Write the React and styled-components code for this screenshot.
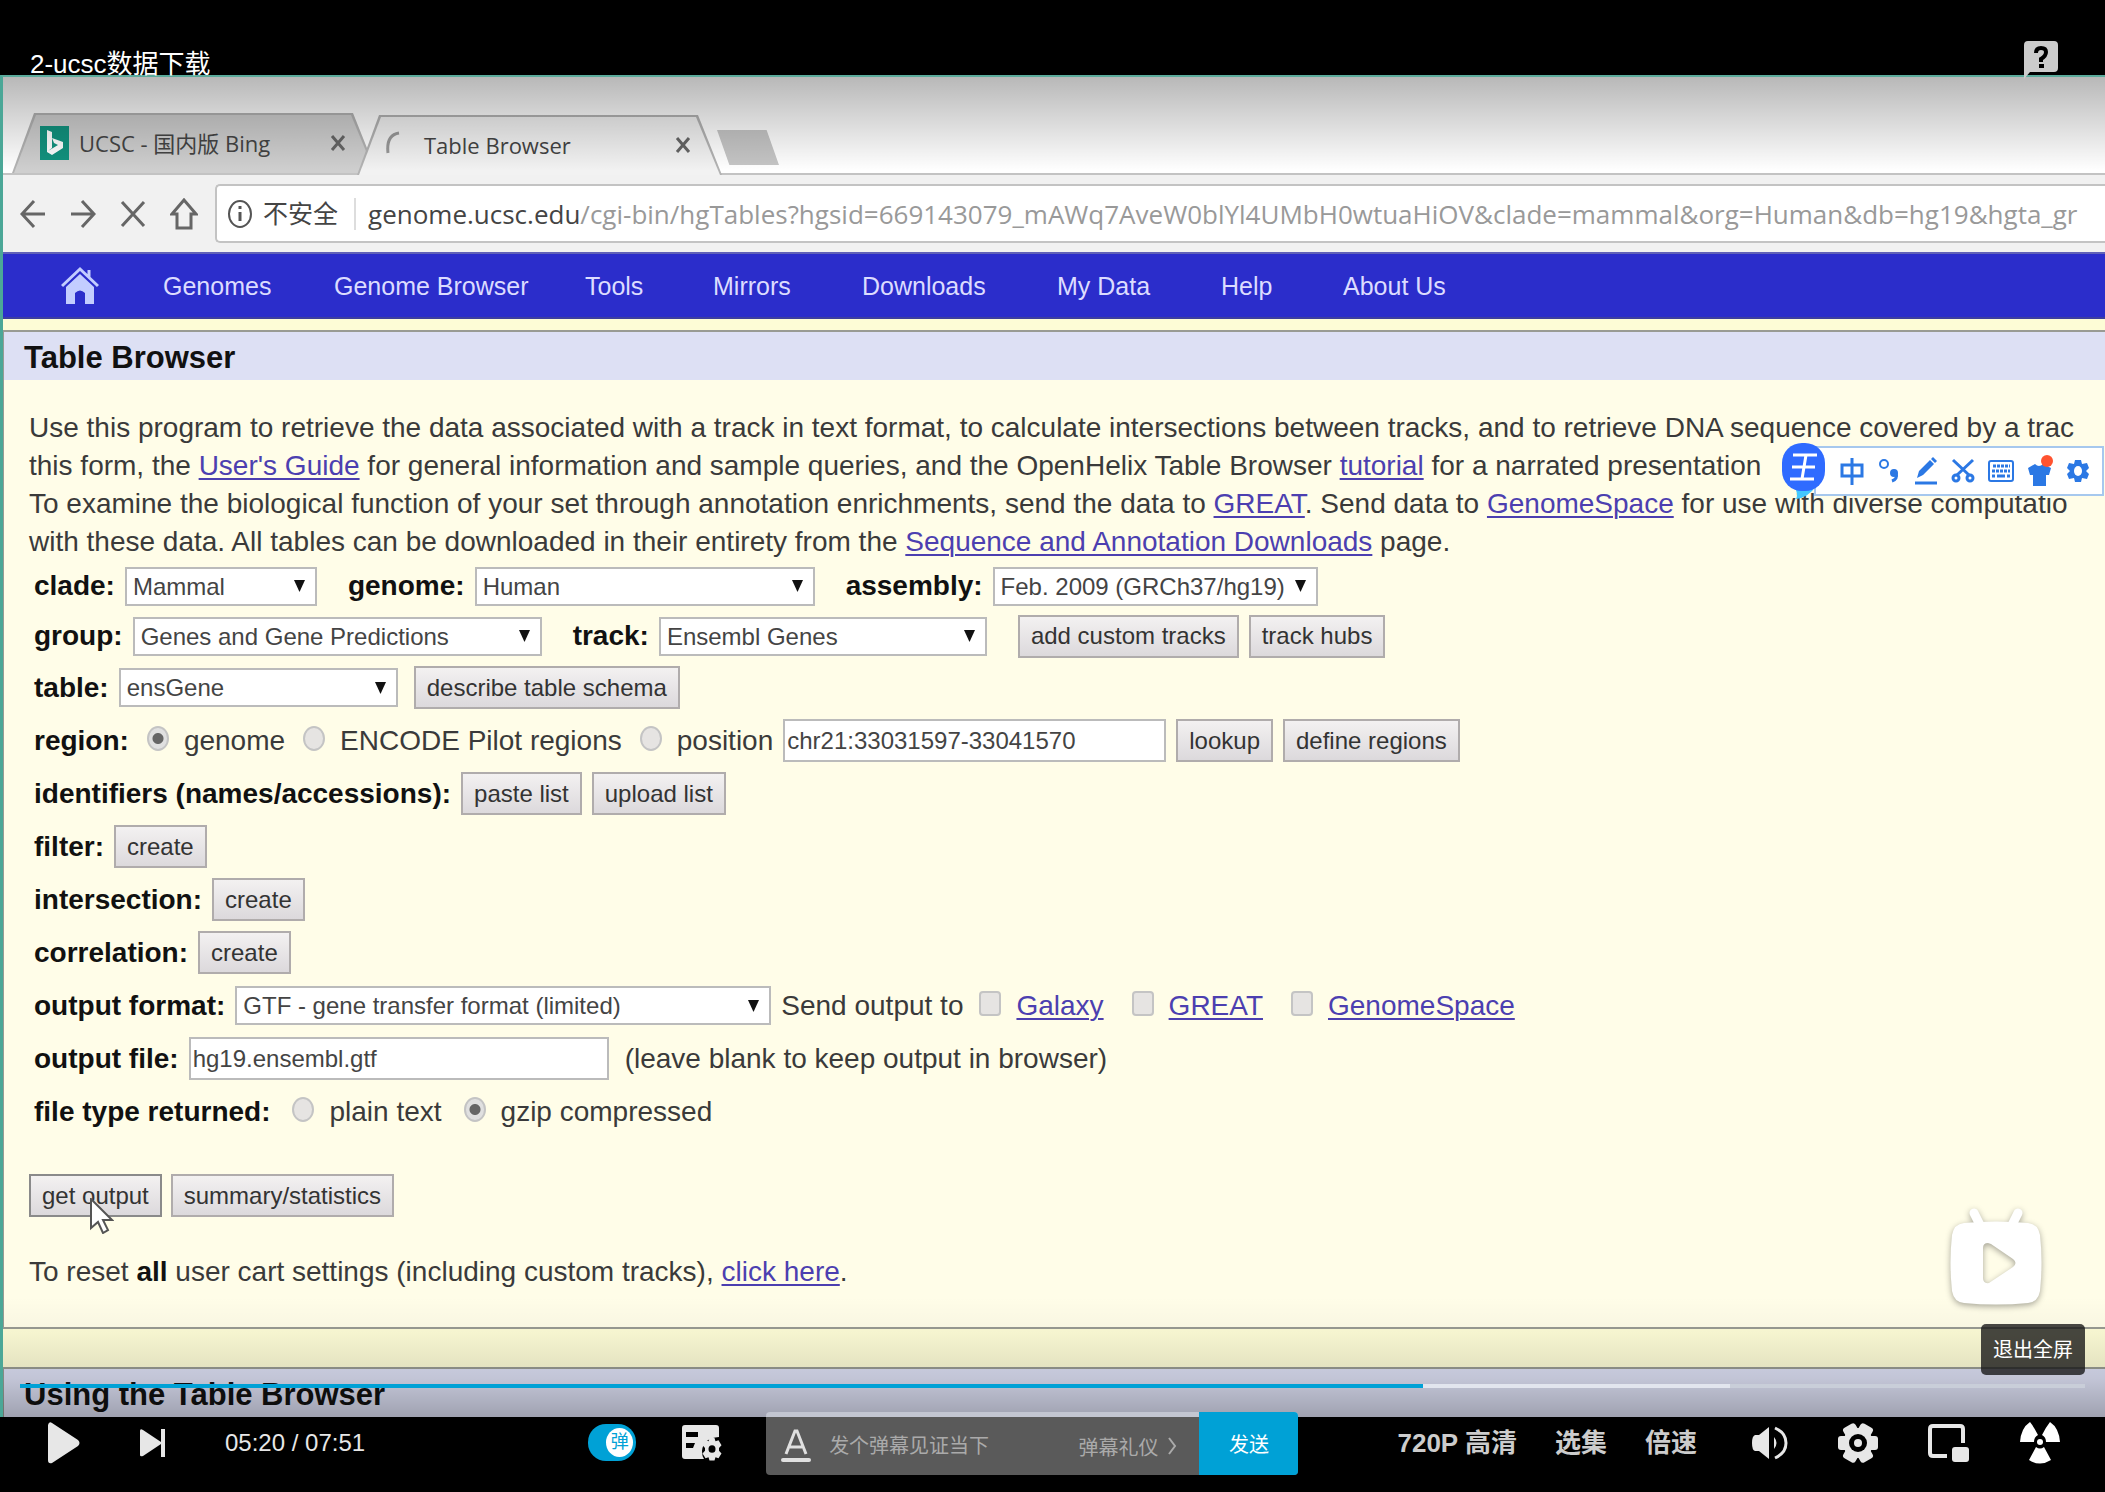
import React from "react";
import styled, { createGlobalStyle } from "styled-components";

const sans = '"Liberation Sans", "Noto Sans CJK SC", Arial, sans-serif';
const uiSans = '"Open Sans", "Noto Sans CJK SC", sans-serif';

const navItems = [
  { name: "Genomes", width: 171 },
  { name: "Genome Browser", width: 251 },
  { name: "Tools", width: 128 },
  { name: "Mirrors", width: 149 },
  { name: "Downloads", width: 195 },
  { name: "My Data", width: 164 },
  { name: "Help", width: 122 },
  { name: "About Us", width: 140 },
];

const played = 1403 / 2065;
const buffered = 1710 / 2065;

const SelectField = ({ id, label, value, width }) => (
  <Field>
    <Label htmlFor={id}>{label}</Label>
    <SelectBox $width={width}>
      <Select id={id} defaultValue={value}>
        <option>{value}</option>
      </Select>
      <svg width="11" height="12" viewBox="0 0 11 12" aria-hidden="true">
        <path d="M0 0h11L5.500 12z" fill="#111" />
      </svg>
    </SelectBox>
  </Field>
);

const Choice = ({ type = "radio", name, checked, children }) => (
  <ChoiceLabel>
    <Tick type={type} name={name} defaultChecked={checked} />
    {children}
  </ChoiceLabel>
);

const Gear = ({ size = 40, fill = "#e7e7e7", hole = "#000" }) => (
  <svg width={size} height={size} viewBox="0 0 40 40" aria-hidden="true">
    <g fill={fill}>
      <circle cx="20" cy="20" r="15" />
      {[0, 60, 120, 180, 240, 300].map((deg) => (
        <rect
          key={deg}
          x="13"
          y="0"
          width="14"
          height="12"
          rx="3"
          transform={`rotate(${deg + 30} 20 20)`}
        />
      ))}
    </g>
    <circle cx="20" cy="20" r="9" fill={hole} />
    <circle cx="20" cy="20" r="4" fill={fill} />
  </svg>
);

const BrowserChrome = () => (
  <>
    <TabStrip>
      <Tab>
        <svg width="29" height="34" viewBox="0 0 29 34" aria-hidden="true">
          <path d="M0 0h29v34H0z" fill="#12937f" />
          <path d="M7 4l5 2v16l-4 3 10-6-4-2-2-5 11 4v6L12 29l-5-3z" fill="#fff" />
        </svg>
        <TabTitle>UCSC - 国内版 Bing</TabTitle>
        <Cross />
      </Tab>
      <Tab $active>
        <svg width="29" height="34" viewBox="0 0 29 34" aria-hidden="true">
          <path d="M3 25Q1 7 14 5" fill="none" stroke="#999" strokeWidth="3" />
        </svg>
        <TabTitle>Table Browser</TabTitle>
        <Cross />
      </Tab>
      <NewTab aria-label="New tab" />
    </TabStrip>
    <AddressRow>
      <ChromeButton aria-label="Back">
        <svg width="26" height="30" viewBox="0 0 26 30">
          <path d="M25 15H2M14 2L2 15l12 13" />
        </svg>
      </ChromeButton>
      <ChromeButton aria-label="Forward">
        <svg width="26" height="30" viewBox="0 0 26 30">
          <path d="M1 15h23M12 2l12 13-12 13" />
        </svg>
      </ChromeButton>
      <ChromeButton aria-label="Stop">
        <svg width="26" height="30" viewBox="0 0 26 30">
          <path d="M2 3l22 24M24 3L2 27" />
        </svg>
      </ChromeButton>
      <ChromeButton aria-label="Home">
        <svg width="28" height="32" viewBox="0 0 28 32">
          <path d="M14 2L2 16h5v14h14V16h5z" />
        </svg>
      </ChromeButton>
      <Omnibox>
        <svg width="26" height="30" viewBox="0 0 26 30" aria-hidden="true">
          <ellipse cx="13" cy="15" rx="11" ry="13" fill="none" stroke="#555" strokeWidth="2" />
          <path d="M13 13v9M13 7v3" stroke="#555" strokeWidth="3" />
        </svg>
        <Security>不安全</Security>
        <Url>
          <b>genome.ucsc.edu</b>
          /cgi-bin/hgTables?hgsid=669143079_mAWq7AveW0blYl4UMbH0wtuaHiOV&amp;clade=mammal&amp;org=Human&amp;db=hg19&amp;hgta_gr
        </Url>
      </Omnibox>
    </AddressRow>
  </>
);

const Cross = () => (
  <TabClose aria-label="Close tab">
    <svg width="16" height="18" viewBox="0 0 16 18">
      <path d="M2 2l12 14M14 2L2 16" stroke="#666" strokeWidth="3" />
    </svg>
  </TabClose>
);

const TableBrowser = () => (
  <Panel>
    <PanelTitle>Table Browser</PanelTitle>
    <PanelBody>
      <Intro>
        Use this program to retrieve the data associated with a track in text format, to calculate
        intersections between tracks, and to retrieve DNA sequence covered by a trac
        <br />
        this form, the <a href="#guide">User's Guide</a> for general information and sample queries,
        and the OpenHelix Table Browser <a href="#tutorial">tutorial</a> for a narrated presentation
        <br />
        To examine the biological function of your set through annotation enrichments, send the data
        to <a href="#great">GREAT</a>. Send data to <a href="#gs">GenomeSpace</a> for use with
        diverse computatio
        <br />
        with these data. All tables can be downloaded in their entirety from the{" "}
        <a href="#downloads">Sequence and Annotation Downloads</a> page.
      </Intro>
      <form onSubmit={(e) => e.preventDefault()}>
        <Row $gap={31} $short>
          <SelectField id="clade" label="clade:" value="Mammal" width={192} />
          <SelectField id="genome" label="genome:" value="Human" width={340} />
          <SelectField id="assembly" label="assembly:" value="Feb. 2009 (GRCh37/hg19)" width={325} />
        </Row>
        <Row $gap={31} $short>
          <SelectField id="group" label="group:" value="Genes and Gene Predictions" width={409} />
          <SelectField id="track" label="track:" value="Ensembl Genes" width={328} />
          <Field>
            <Button>add custom tracks</Button>
            <Button>track hubs</Button>
          </Field>
        </Row>
        <Row $gap={16}>
          <SelectField id="table" label="table:" value="ensGene" width={279} />
          <Button>describe table schema</Button>
        </Row>
        <Row $gap={18}>
          <Label as="span">region:</Label>
          <Choice name="region" checked>genome</Choice>
          <Choice name="region">ENCODE Pilot regions</Choice>
          <Field>
            <Choice name="region">position</Choice>
            <TextInput aria-label="position" defaultValue="chr21:33031597-33041570" $width={383} />
            <Button>lookup</Button>
            <Button>define regions</Button>
          </Field>
        </Row>
        <Row>
          <Label as="span">identifiers (names/accessions):</Label>
          <Button>paste list</Button>
          <Button>upload list</Button>
        </Row>
        {["filter:", "intersection:", "correlation:"].map((name) => (
          <Row key={name}>
            <Label as="span">{name}</Label>
            <Button>create</Button>
          </Row>
        ))}
        <Row>
          <SelectField
            id="format"
            label="output format:"
            value="GTF - gene transfer format (limited)"
            width={536}
          />
          <span>Send output to</span>
          <SendTo>
            <Choice type="checkbox"><a href="#galaxy">Galaxy</a></Choice>
            <Choice type="checkbox"><a href="#great">GREAT</a></Choice>
            <Choice type="checkbox"><a href="#gs">GenomeSpace</a></Choice>
          </SendTo>
        </Row>
        <Row $gap={16}>
          <Field>
            <Label htmlFor="file">output file:</Label>
            <TextInput id="file" defaultValue="hg19.ensembl.gtf" $width={420} />
          </Field>
          <span>(leave blank to keep output in browser)</span>
        </Row>
        <Row $gap={22}>
          <Label as="span">file type returned:</Label>
          <Choice name="filetype">plain text</Choice>
          <Choice name="filetype" checked>gzip compressed</Choice>
        </Row>
        <Actions>
          <Button $focus>
            get output
            <Pointer width="24" height="36" viewBox="0 0 24 36" aria-hidden="true">
              <path d="M1 1v29l7-6 5 11 5-3-5-10h9z" fill="#fff" stroke="#555" strokeWidth="2" />
            </Pointer>
          </Button>
          <Button>summary/statistics</Button>
        </Actions>
      </form>
      <Intro as="div">
        To reset <b>all</b> user cart settings (including custom tracks),{" "}
        <a href="#reset">click here</a>.
      </Intro>
    </PanelBody>
  </Panel>
);

const InputMethodBar = () => (
  <ImeBar>
    <ImeLogo width="44" height="56" viewBox="0 0 44 56" aria-hidden="true">
      <path d="M14 47q2 6 0 9 12-1 20-13z" fill="#43c8ff" />
      <rect width="43" height="48" rx="20" fill="#2f6bff" />
      <path d="M11 12h24M10 24h23M8 36h24M24 12l-4 24" stroke="#fff" strokeWidth="3" />
    </ImeLogo>
    <svg width="24" height="28" viewBox="0 0 24 28">
      <path d="M2 8h20v11H2zM12 1v27" strokeWidth="3" />
    </svg>
    <svg width="24" height="28" viewBox="0 0 24 28">
      <circle cx="7" cy="7" r="4" />
      <path d="M15 24q6-2 4-8" strokeWidth="3" />
      <circle cx="17" cy="16" r="2" strokeWidth="4" />
    </svg>
    <svg width="24" height="28" viewBox="0 0 24 28">
      <path d="M1 26h22" strokeWidth="3" />
      <path d="M3 21l2-7L16 3l4 4L9 18zM17 2l2-2 4 4-2 2z" fill="#2b78e4" stroke="none" />
    </svg>
    <svg width="24" height="28" viewBox="0 0 24 28">
      <path d="M2 3l16 15M22 3L6 18" strokeWidth="3" />
      <circle cx="5" cy="21" r="3" strokeWidth="3" />
      <circle cx="19" cy="21" r="3" strokeWidth="3" />
    </svg>
    <svg width="26" height="28" viewBox="0 0 26 28">
      <rect x="1" y="4" width="24" height="20" rx="2" />
      <path d="M5 9h17M4 14h18" strokeWidth="3" strokeDasharray="3 1" />
      <path d="M4 19h3M9 19h8M19 19h3" strokeWidth="3" />
    </svg>
    <svg width="26" height="32" viewBox="0 0 26 32">
      <path d="M8 9q4 4 8 0l8 4-2 7h-3v11H6V20H3l-2-7z" fill="#2b78e4" stroke="none" />
      <circle cx="20" cy="6" r="6" fill="#ff5330" stroke="none" />
    </svg>
    <svg width="24" height="28" viewBox="0 0 24 28">
      <path d="M9 3h6l1 4 5-1 2 5-3 3 3 3-2 5-5-1-1 4H9l-1-4-5 1-2-5 3-3-3-3 2-5 5 1z" fill="#2b78e4" stroke="none" />
      <ellipse cx="12" cy="14" rx="4" ry="5" fill="#fff" stroke="none" />
    </svg>
  </ImeBar>
);

const Player = () => (
  <Controls>
    <LeftTools>
      <IconButton aria-label="Play">
        <svg width="32" height="42" viewBox="0 0 32 42">
          <path d="M0 3Q1-1 4 1L30 18q3 3 0 6L4 41q-4 1-4-3z" />
        </svg>
      </IconButton>
      <IconButton aria-label="Next">
        <svg width="25" height="28" viewBox="0 0 25 28">
          <path d="M0 2Q0-1 3 1l18 12q1 1 0 2L3 27q-3 1-3-1z" />
          <path d="M21 0h4v28h-4z" />
        </svg>
      </IconButton>
      <Time>05:20 / 07:51</Time>
    </LeftTools>
    <DanmakuTools>
      <Toggle aria-label="弹幕开关"><span>弹</span></Toggle>
      <IconButton aria-label="弹幕设置">
        <svg width="40" height="36" viewBox="0 0 40 36">
          <path d="M3 0h31q3 0 3 3v9q-16 1-17 14 0 5 2 8H3q-3 0-3-3V3q0-3 3-3z" />
          <path d="M4 7h12v5H4zM4 18h9l-2 5H4z" fill="#000" />
          <g transform="translate(20 13) scale(.5 .55)">
            <path d="M15 0h10l2 6 6-2 6 9-5 5v5l5 5-6 9-6-2-2 6H15l-2-6-6 2-6-9 5-5v-5l-5-5 6-9 6 2z" />
            <circle cx="20" cy="20" r="7" fill="#000" />
          </g>
        </svg>
      </IconButton>
    </DanmakuTools>
    <SendBar>
      <svg width="30" height="34" viewBox="0 0 30 34" aria-hidden="true">
        <path d="M5 25L14 2h2l9 23M9 18h12" fill="none" stroke="#e0e0e0" strokeWidth="3" />
        <path d="M2 31h26" stroke="#e0e0e0" strokeWidth="4" strokeLinecap="round" />
      </svg>
      <DanmakuInput aria-label="弹幕" placeholder="发个弹幕见证当下" />
      <Etiquette href="#etiquette">
        弹幕礼仪
        <svg width="10" height="18" viewBox="0 0 10 18" aria-hidden="true">
          <path d="M2 1l6 8-6 8" fill="none" stroke="#aaa" strokeWidth="2" />
        </svg>
      </Etiquette>
      <SendButton>发送</SendButton>
    </SendBar>
    <RightTools>
      <TextTools>
        <TextButton>720P 高清</TextButton>
        <TextButton>选集</TextButton>
        <TextButton>倍速</TextButton>
      </TextTools>
      <IconButton aria-label="Volume">
        <svg width="36" height="34" viewBox="0 0 36 34">
          <path d="M17 1v32L7 25H3q-3-1-3-8t3-8h4z" />
          <path d="M22 11q5 6 0 12z" />
          <path d="M23 2q11 5 11 15T23 32" fill="none" stroke="#e7e7e7" strokeWidth="3" />
        </svg>
      </IconButton>
      <IconButton aria-label="Settings">
        <Gear />
      </IconButton>
      <IconButton aria-label="Picture in picture">
        <svg width="42" height="38" viewBox="0 0 42 38">
          <path
            d="M19 32H5q-3 0-3-3V5q0-3 3-3h27q3 0 3 3v14"
            fill="none"
            stroke="#e7e7e7"
            strokeWidth="4"
          />
          <rect x="24" y="23" width="17" height="15" rx="3" />
        </svg>
      </IconButton>
      <IconButton aria-label="退出全屏">
        <svg width="40" height="42" viewBox="0 0 40 42">
          <g fill="#fff">
            <path d="M0 20Q1 6 10 0q4 5 8 13-4 2-4 7z" />
            <path d="M40 20Q39 6 30 0q-4 5-8 13 4 2 4 7z" />
            <path d="M16 25q4 3 8 0l7 13q-11 7-22 0z" />
            <circle cx="20" cy="20" r="3" />
          </g>
        </svg>
      </IconButton>
    </RightTools>
  </Controls>
);

const App = () => {
  return (
    <Screen>
      <GlobalStyle />
      <TopBar>
        <VideoTitle>2-ucsc数据下载</VideoTitle>
        <HelpButton aria-label="Help">
          <svg width="34" height="38" viewBox="0 0 34 38">
            <path d="M4 0h26q4 0 4 4v23q0 4-4 4H6l-6 7V4q0-4 4-4z" fill="#ccc" />
            <path d="M12 12q0-5 5-5t5 4-5 7v3" fill="none" stroke="#000" strokeWidth="4" />
            <path d="M15 23h5v4h-5z" />
          </svg>
        </HelpButton>
      </TopBar>
      <Stage>
        <BrowserChrome />
        <Nav>
          <HomeLink href="#home" aria-label="Home">
            <svg width="38" height="40" viewBox="0 0 38 40">
              <path d="M1 20L19 3l18 17M28 4v7" fill="none" stroke="#c3cdff" strokeWidth="3" />
              <path d="M5 21L19 8l14 13v17h-9V27q-5-5-10 0v11H5z" fill="#c3cdff" />
            </svg>
          </HomeLink>
          {navItems.map((item) => (
            <NavLink key={item.name} href="#nav" $width={item.width}>
              {item.name}
            </NavLink>
          ))}
        </Nav>
        <PageArea>
          <TableBrowser />
          <Panel $last>
            <PanelTitle>Using the Table Browser</PanelTitle>
          </Panel>
        </PageArea>
        <Shade />
        <InputMethodBar />
        <TvBadge width="96" height="104" viewBox="0 0 96 104" aria-hidden="true">
          <path d="M26 8l7 14M70 8l-7 14" stroke="#fff" strokeWidth="9" strokeLinecap="round" />
          <path
            fillRule="evenodd"
            fill="#fff"
            d="M16 18Q48 15 80 18q10 1 12 12 3 28 0 56-2 11-12 12-32 3-64 0Q6 97 4 86 1 58 4 30 6 19 16 18zM40 38q-5 0-5 5v30q0 6 6 5l24-16q5-4 0-8L43 39z"
          />
        </TvBadge>
        <Tooltip>退出全屏</Tooltip>
        <Progress>
          <Bar $color="#e2e5ee" style={{ width: `${buffered * 100}%` }} />
          <Bar $color="#00a1d6" style={{ width: `${played * 100}%` }} />
        </Progress>
      </Stage>
      <Player />
    </Screen>
  );
};

export default App;

const GlobalStyle = createGlobalStyle`
  * {
    box-sizing: border-box;
  }

  body {
    margin: 0;
    background: #000;
  }

  button, input, select {
    font-family: inherit;
    margin: 0;
  }
`;

const Screen = styled.div`
  display: flex;
  flex-direction: column;
  min-height: 100vh;
  overflow: hidden;
  font-family: ${sans};
`;

const TopBar = styled.header`
  display: flex;
  justify-content: space-between;
  align-items: flex-start;
  height: 75px;
  padding: 41px 47px 0 30px;
  position: relative;
  z-index: 2;
`;

const VideoTitle = styled.div`
  font-size: 26px;
  line-height: 46px;
  color: #fff;
`;

const PlainButton = styled.button`
  display: flex;
  padding: 0;
  border: 0;
  background: none;
  cursor: pointer;
`;

const HelpButton = styled(PlainButton)``;

const Stage = styled.main`
  position: relative;
  flex: 1;
  overflow: hidden;
  border-top: 2px solid #5bab9c;
  border-left: 3px solid #4ba797;
  background: #fff;
`;

const TabStrip = styled.div`
  display: flex;
  align-items: flex-end;
  height: 98px;
  padding-left: 9px;
  border-bottom: 2px solid #c3c3c3;
`;

const Tab = styled.div`
  position: relative;
  z-index: 0;
  display: flex;
  align-items: center;
  width: 365px;
  height: 60px;
  margin-right: -20px;
  margin-bottom: ${(props) => (props.$active ? "-2px" : "0")};
  padding: 0 31px 0 28px;
  background: #b3b3b3;
  clip-path: polygon(22px 0, calc(100% - 24px) 0, 100% 100%, 0 100%);

  &::before {
    content: "";
    position: absolute;
    z-index: -1;
    inset: 2px 2px 0;
    background: ${(props) => (props.$active ? "#f2f2f2" : "#cfcfcf")};
    clip-path: polygon(22px 0, calc(100% - 24px) 0, 100% 100%, 0 100%);
  }
`;

const TabTitle = styled.span`
  flex: 1;
  margin-left: 10px;
  font-family: ${uiSans};
  font-size: 22px;
  line-height: 30px;
  color: #444;
  white-space: nowrap;
`;

const TabClose = styled(PlainButton)``;

const NewTab = styled.button`
  width: 62px;
  height: 35px;
  margin: 0 0 8px 15px;
  border: 0;
  background: #c6c6c6;
  clip-path: polygon(0 0, 80% 0, 100% 100%, 20% 100%);
`;

const AddressRow = styled.div`
  display: flex;
  align-items: center;
  gap: 24px;
  height: 77px;
  padding-left: 17px;
  background: #f1f1f1;
`;

const ChromeButton = styled(PlainButton)`
  svg {
    fill: none;
    stroke: #666;
    stroke-width: 3;
  }
`;

const Omnibox = styled.div`
  display: flex;
  align-items: center;
  flex: 1;
  min-width: 0;
  height: 59px;
  margin-left: -7px;
  padding-left: 10px;
  overflow: hidden;
  border: 2px solid #c3c3c3;
  border-right: 0;
  border-radius: 5px 0 0 5px;
  background: #fff;

  svg {
    flex-shrink: 0;
  }
`;

const Security = styled.span`
  margin: 0 12px 0 10px;
  padding-right: 16px;
  border-right: 2px solid #ddd;
  font-size: 25px;
  line-height: 32px;
  color: #444;
  white-space: nowrap;
`;

const Url = styled.span`
  font-family: ${uiSans};
  font-size: 26px;
  line-height: 32px;
  color: #999;
  white-space: nowrap;

  b {
    font-weight: 400;
    color: #444;
  }
`;

const Nav = styled.nav`
  display: flex;
  align-items: center;
  height: 67px;
  padding-left: 58px;
  border-top: 2px solid #6061b8;
  border-bottom: 2px solid #3d3f9f;
  background: #2b2dcb;
`;

const HomeLink = styled.a`
  display: flex;
  width: 102px;
`;

const NavLink = styled.a`
  width: ${(props) => props.$width}px;
  font-size: 25px;
  line-height: 32px;
  color: #dcdcff;
  text-decoration: none;
  white-space: nowrap;
`;

const PageArea = styled.div`
  padding-top: 11px;
  background: #fdfcd6;
`;

const Panel = styled.section`
  margin-bottom: ${(props) => (props.$last ? "0" : "38px")};
  border: 2px solid #999b93;
  border-width: ${(props) => (props.$last ? "2px 0 0 1px" : "2px 0 2px 1px")};
  background: #fffde8;
`;

const PanelTitle = styled.h1`
  margin: 0;
  padding: 4px 20px 0;
  font-size: 31px;
  line-height: 44px;
  font-weight: 700;
  color: #111;
  background: #dde0f4;
`;

const PanelBody = styled.div`
  padding: 29px 0 36px 25px;
  font-size: 28px;
  line-height: 38px;
  color: #3a3a3a;
  white-space: nowrap;

  a {
    color: #4c3fb0;
    text-underline-offset: 3px;
    text-decoration-thickness: 2px;
  }
`;

const Intro = styled.p`
  margin: 0;

  b {
    color: #111;
  }
`;

const Row = styled.div`
  display: flex;
  align-items: center;
  gap: ${(props) => props.$gap || 10}px;
  height: ${(props) => (props.$short ? "50px" : "53px")};
  padding-left: 5px;
`;

const Field = styled.div`
  display: flex;
  align-items: center;
  gap: 10px;
`;

const Label = styled.label`
  font-weight: 700;
  color: #111;
`;

const SelectBox = styled.span`
  display: grid;
  align-items: center;
  width: ${(props) => props.$width}px;

  > * {
    grid-area: 1 / 1;
  }

  svg {
    justify-self: end;
    margin-right: 12px;
    pointer-events: none;
  }
`;

const Select = styled.select`
  appearance: none;
  width: 100%;
  height: 39px;
  padding: 0 6px;
  border: 2px solid #bbb;
  border-radius: 0;
  background: #fff;
  font-size: 24px;
  color: #444;
`;

const TextInput = styled.input`
  width: ${(props) => props.$width}px;
  height: 43px;
  padding: 0 2px;
  border: 2px solid #bbb;
  background: #fff;
  font-size: 24px;
  color: #444;
`;

const Button = styled.button`
  position: relative;
  height: 43px;
  padding: 0 11px;
  border: 2px solid ${(props) => (props.$focus ? "#8a8a8a" : "#b0acac")};
  background: linear-gradient(#f3f1f1, #dcd9dc);
  font-size: 24px;
  color: #333;
  white-space: nowrap;
`;

const ChoiceLabel = styled.label`
  display: flex;
  align-items: center;
  gap: 15px;
`;

const Tick = styled.input`
  appearance: none;
  width: 22px;
  height: 25px;
  margin-bottom: 4px;
  border: 2px solid #c4c4c4;
  border-radius: ${(props) => (props.type === "radio" ? "50%" : "4px")};
  background: #e6e4e2;

  &:checked {
    background: radial-gradient(circle, #666 5px, #e0e0e0 6px);
  }
`;

const SendTo = styled.div`
  display: flex;
  gap: 28px;
  margin-left: 6px;
`;

const Actions = styled.div`
  display: flex;
  gap: 9px;
  padding: 36px 0;
`;

// mouse pointer resting on the button
const Pointer = styled.svg`
  position: absolute;
  left: 59px;
  top: 22px;
`;

const Shade = styled.div`
  position: absolute;
  inset: 0;
  pointer-events: none;
  background:
    linear-gradient(rgba(0, 0, 0, 0.28), rgba(0, 0, 0, 0)) top / 100% 94px no-repeat,
    linear-gradient(
        rgba(0, 0, 0, 0),
        rgba(0, 0, 0, 0.03) 30%,
        rgba(0, 0, 0, 0.12) 68%,
        rgba(0, 0, 0, 0.28)
      )
      bottom / 100% 120px no-repeat;
`;

const ImeBar = styled.div`
  position: absolute;
  top: 369px;
  right: 1px;
  display: flex;
  align-items: center;
  gap: 13px;
  height: 50px;
  padding: 0 12px 0 24px;
  border: 2px solid #a6c8ee;
  background: #fff;

  svg {
    fill: none;
    stroke: #2b78e4;
    stroke-width: 2;
  }
`;

const ImeLogo = styled.svg`
  position: absolute;
  left: -34px;
  top: -5px;

  && {
    stroke: none;
  }

  path:last-child {
    stroke: #fff;
  }
`;

const TvBadge = styled.svg`
  position: absolute;
  right: 61px;
  bottom: 108px;
  filter: drop-shadow(0 2px 3px rgba(0, 0, 0, 0.35));
`;

const Tooltip = styled.div`
  position: absolute;
  right: 20px;
  bottom: 42px;
  padding: 2px 12px 0;
  border-radius: 5px;
  background: rgba(20, 20, 20, 0.78);
  font-size: 20px;
  line-height: 49px;
  color: #fff;
`;

const Progress = styled.div`
  position: absolute;
  left: 17px;
  right: 20px;
  bottom: 29px;
  display: grid;
  height: 4px;
  background: #c9ced9;
`;

const Bar = styled.div`
  grid-area: 1 / 1;
  background: ${(props) => props.$color};
`;

const Controls = styled.footer`
  position: relative;
  display: flex;
  align-items: flex-start;
  justify-content: space-between;
  height: 75px;
  padding: 0 45px 0 48px;
  background: #000;
`;

const ToolGroup = styled.div`
  display: flex;
  align-items: center;
  flex-shrink: 0;
  height: 51px;
`;

const LeftTools = styled(ToolGroup)`
  gap: 60px;
`;

const DanmakuTools = styled(ToolGroup)`
  gap: 46px;
  margin-left: 223px;
`;

const RightTools = styled(ToolGroup)`
  gap: 50px;
  margin-left: 99px;
`;

const TextTools = styled(ToolGroup)`
  gap: 38px;
  margin-right: 5px;
`;

const IconButton = styled(PlainButton)`
  svg {
    fill: #e7e7e7;
  }
`;

const Time = styled.span`
  font-size: 24px;
  line-height: 32px;
  color: #e7e7e7;
  white-space: nowrap;
`;

const Toggle = styled.button`
  display: flex;
  justify-content: flex-end;
  align-items: center;
  width: 48px;
  height: 37px;
  padding: 0 3px;
  border: 0;
  border-radius: 18px;
  background: #00a1d6;

  span {
    width: 27px;
    height: 29px;
    border-radius: 50%;
    background: #fff;
    font-size: 18px;
    line-height: 28px;
    color: #00a1d6;
    text-align: center;
  }
`;

const SendBar = styled.div`
  display: flex;
  align-items: center;
  flex: 1;
  min-width: 0;
  height: 63px;
  margin: -5px 0 0 44px;
  padding-left: 15px;
  border-radius: 4px;
  background: #5a5a5a;
  border-top: 5px solid #c3c6d1;

  > svg {
    flex-shrink: 0;
  }
`;

const DanmakuInput = styled.input`
  flex: 1;
  min-width: 0;
  margin-left: 18px;
  padding: 0;
  border: 0;
  background: none;
  font-size: 20px;
  color: #fff;

  &::placeholder {
    color: #aaa;
    opacity: 1;
  }
`;

const Etiquette = styled.a`
  display: flex;
  align-items: center;
  gap: 9px;
  margin-right: 22px;
  font-size: 20px;
  color: #aaa;
  text-decoration: none;
  white-space: nowrap;
`;

const SendButton = styled.button`
  flex-shrink: 0;
  width: 99px;
  height: 63px;
  margin-top: -5px;
  border: 0;
  border-radius: 0 4px 4px 0;
  background: #00a1d6;
  font-size: 20px;
  color: #fff;
`;

const TextButton = styled(PlainButton)`
  font-size: 26px;
  line-height: 36px;
  font-weight: 700;
  color: #ccc;
  white-space: nowrap;
`;
